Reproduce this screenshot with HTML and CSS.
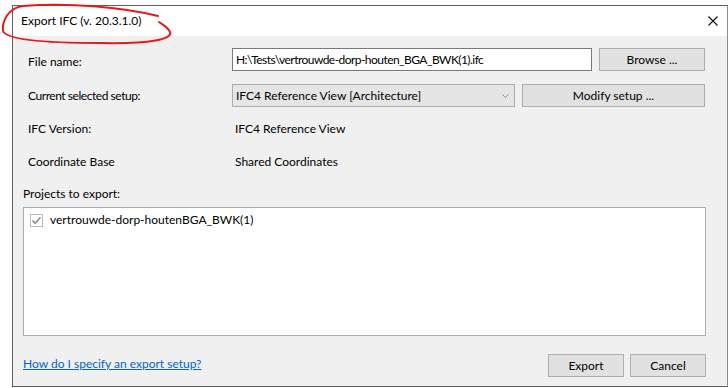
FILE: index.html
```html
<!DOCTYPE html>
<html lang="en">
<head>
    <meta charset="UTF-8">
    <title>Export IFC</title>
    <link rel="stylesheet" href="styles.css">
</head>
<body>
    <div class="window">
        <div class="titlebar">
            <span class="title">Export IFC (v. 20.3.1.0)</span>
            <svg class="close" width="10" height="10" viewBox="0 0 10 10">
                <path d="M0.5 0.5 L9.5 9.5 M9.5 0.5 L0.5 9.5" stroke="#111" stroke-width="1.1" fill="none"/>
            </svg>
        </div>

        <div class="content">
            <div class="form">
                <div class="label">File name:</div>
                <div class="field">
                    <div class="textbox">H:\Tests\vertrouwde-dorp-houten_BGA_BWK(1).ifc</div>
                    <button class="btn browse">Browse ...</button>
                </div>

                <div class="label tight">Current selected setup:</div>
                <div class="field">
                    <div class="combo">
                        <span>IFC4 Reference View [Architecture]</span>
                        <svg width="7" height="4" viewBox="0 0 7 4">
                            <path d="M0.5 0.5 L3.5 3.5 L6.5 0.5" stroke="#8a8a8a" stroke-width="1" fill="none"/>
                        </svg>
                    </div>
                    <button class="btn modify">Modify setup ...</button>
                </div>

                <div class="label">IFC Version:</div>
                <div class="field value">IFC4 Reference View</div>

                <div class="label">Coordinate Base</div>
                <div class="field value">Shared Coordinates</div>
            </div>

            <div class="projects-label">Projects to export:</div>
            <div class="listbox">
                <div class="item">
                    <span class="check">
                        <svg width="11" height="11" viewBox="0 0 11 11">
                            <path d="M1.5 5.5 L4.2 8.3 L9.5 2.2" stroke="#8c8c8c" stroke-width="1.6" fill="none"/>
                        </svg>
                    </span>
                    vertrouwde-dorp-houtenBGA_BWK(1)
                </div>
            </div>

            <div class="footer">
                <a class="help" href="#">How do I specify an export setup?</a>
                <div class="actions">
                    <button class="btn">Export</button>
                    <button class="btn">Cancel</button>
                </div>
            </div>
        </div>

        <!-- red marker scribbled round the title -->
        <svg class="scribble" width="180" height="48" viewBox="0 0 180 48">
            <path d="M157 15 C125 7 70 1 22 5 C7 7 1 20 2 30 C5 38 40 42 100 42 C150 43 172 38 169 31 C167 26 161 23 158 21"
                  stroke="#e8191b" stroke-width="2" fill="none" stroke-linecap="round"/>
        </svg>
    </div>
</body>
</html>
```

FILE: styles.css
```css
* {
    margin: 0;
    padding: 0;
    box-sizing: border-box;
}
body {
    background: #fff;
    font-family: 'Lato', 'Noto Sans', sans-serif;
    font-size: 12px;
    color: #000;
}
.window {
    position: relative;
    margin: 5px 0 0 12px;
    width: 716px;
    height: 382px;
    border: 1px solid #5f5f5f;
    border-right-color: #8c8c8c;
    display: flex;
    flex-direction: column;
}
.titlebar {
    height: 30px;
    background: #fff;
    display: flex;
    align-items: center;
    justify-content: space-between;
    padding: 0 9px 0 8px;
}
.title {
    line-height: 16px;
}
.content {
    flex: 1;
    background: #f0f0f0;
    padding: 12px 21px 0 10px;
}
.form {
    display: grid;
    grid-template-columns: 204px 1fr;
    grid-template-rows: 26px 23px 23px 23px;
    row-gap: 10px;
    padding-left: 5px;
}
.label {
    display: flex;
    align-items: center;
}
.tight {
    letter-spacing: -0.45px;
}
.field {
    display: flex;
    align-items: flex-start;
    gap: 7px;
}
.value {
    align-items: center;
    padding-left: 3px;
}
.textbox {
    width: 360px;
    height: 23px;
    background: #fff;
    border: 1px solid #7a7a7a;
    padding: 0 3px;
    line-height: 21px;
    letter-spacing: -0.55px;
    white-space: nowrap;
    overflow: hidden;
}
.combo {
    width: 283px;
    height: 23px;
    background: #e5e5e5;
    border: 1px solid #acacac;
    display: flex;
    align-items: center;
    justify-content: space-between;
    padding: 0 5px 0 3px;
}
.btn {
    height: 23px;
    background: #e1e1e1;
    border: 1px solid #adadad;
    font-family: inherit;
    font-size: 12px;
    color: #000;
}
.browse {
    width: 106px;
}
.modify {
    width: 183px;
}
.projects-label {
    margin-top: 13px;
    line-height: 16px;
}
.listbox {
    margin-top: 5px;
    height: 129px;
    background: #fff;
    border: 1px solid #abadb3;
    padding: 4px 6px;
}
.item {
    display: flex;
    align-items: center;
    gap: 7px;
    line-height: 16px;
}
.check {
    width: 13px;
    height: 13px;
    border: 1px solid #bcbcbc;
    background: #fff;
    display: flex;
    align-items: center;
    justify-content: center;
}
.footer {
    margin-top: 18px;
    display: flex;
    justify-content: space-between;
    align-items: center;
}
.help {
    color: #0066cc;
    text-decoration: underline;
    margin-bottom: 5px;
}
.actions {
    display: flex;
    gap: 6px;
}
.actions .btn {
    width: 76px;
}
.scribble {
    position: absolute;
    left: -12px;
    top: -5px;
    pointer-events: none;
}
```
